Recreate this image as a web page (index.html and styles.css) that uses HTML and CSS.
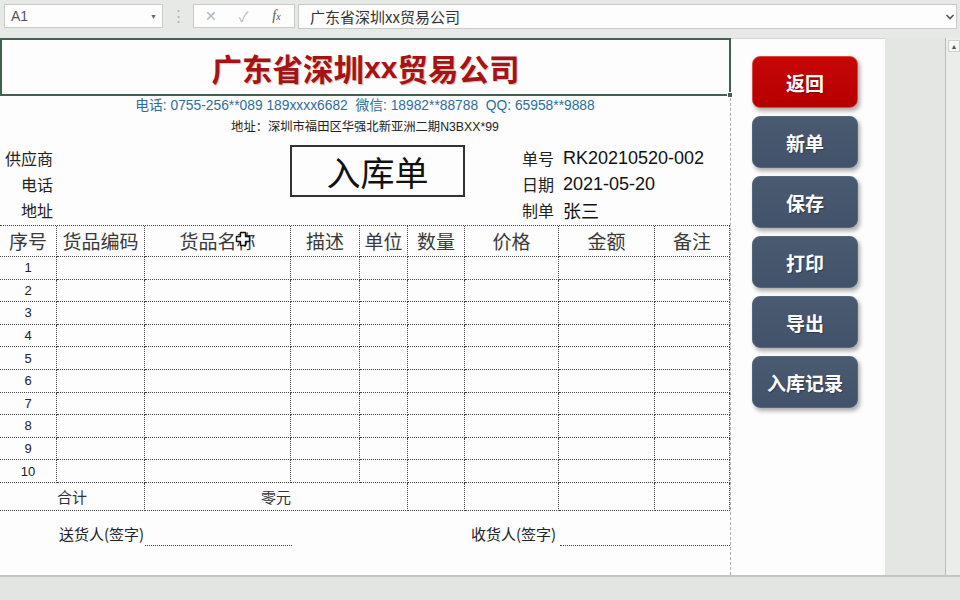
FILE: index.html
```html
<!DOCTYPE html>
<html lang="zh-CN">
<head>
<meta charset="utf-8">
<title>入库单</title>
<link rel="stylesheet" href="styles.css">
</head>
<body>
<div class="app">
  <div class="topbar">
    <div class="namebox"><span>A1</span><span class="caret">▼</span></div>
    <div class="grip">⋮</div>
    <div class="fbtns"><span class="fb x">✕</span><span class="fb ok">✓</span><span class="fb fx">f<small>x</small></span></div>
    <div class="formula"><span>广东省深圳xx贸易公司</span>
      <svg class="chev" width="10" height="8" viewBox="0 0 10 8"><path d="M1.5 2 L5 5.5 L8.5 2" fill="none" stroke="#555" stroke-width="1.6"/></svg>
    </div>
  </div>
  <div class="main">
    <div class="sheet">
      <div class="page">
        <div class="title">广东省深圳<span class="lat">xx</span>贸易公司<span class="handle"></span></div>
        <div class="contact">电话: 0755-256**089 189xxxx6682&nbsp; 微信: 18982**88788&nbsp; QQ: 65958**9888</div>
        <div class="addr">地址：深圳市福田区华强北新亚洲二期N3BXX*99</div>
        <div class="info">
          <div class="labels"><div>供应商</div><div>电话</div><div>地址</div></div>
          <div class="doctitle">入库单</div>
          <div class="meta">
            <div class="mrow"><span class="mk">单号</span><span class="mv">RK20210520-002</span></div>
            <div class="mrow"><span class="mk">日期</span><span class="mv">2021-05-20</span></div>
            <div class="mrow"><span class="mk">制单</span><span class="mv cjk">张三</span></div>
          </div>
        </div>
        <div class="grid">
          <div class="c h">序号</div><div class="c h">货品编码</div><div class="c h">货品名称</div><div class="c h">描述</div><div class="c h">单位</div><div class="c h">数量</div><div class="c h">价格</div><div class="c h">金额</div><div class="c h">备注</div>
          <div class="c n">1</div><div class="c"></div><div class="c"></div><div class="c"></div><div class="c"></div><div class="c"></div><div class="c"></div><div class="c"></div><div class="c"></div>
          <div class="c n">2</div><div class="c"></div><div class="c"></div><div class="c"></div><div class="c"></div><div class="c"></div><div class="c"></div><div class="c"></div><div class="c"></div>
          <div class="c n">3</div><div class="c"></div><div class="c"></div><div class="c"></div><div class="c"></div><div class="c"></div><div class="c"></div><div class="c"></div><div class="c"></div>
          <div class="c n">4</div><div class="c"></div><div class="c"></div><div class="c"></div><div class="c"></div><div class="c"></div><div class="c"></div><div class="c"></div><div class="c"></div>
          <div class="c n">5</div><div class="c"></div><div class="c"></div><div class="c"></div><div class="c"></div><div class="c"></div><div class="c"></div><div class="c"></div><div class="c"></div>
          <div class="c n">6</div><div class="c"></div><div class="c"></div><div class="c"></div><div class="c"></div><div class="c"></div><div class="c"></div><div class="c"></div><div class="c"></div>
          <div class="c n">7</div><div class="c"></div><div class="c"></div><div class="c"></div><div class="c"></div><div class="c"></div><div class="c"></div><div class="c"></div><div class="c"></div>
          <div class="c n">8</div><div class="c"></div><div class="c"></div><div class="c"></div><div class="c"></div><div class="c"></div><div class="c"></div><div class="c"></div><div class="c"></div>
          <div class="c n">9</div><div class="c"></div><div class="c"></div><div class="c"></div><div class="c"></div><div class="c"></div><div class="c"></div><div class="c"></div><div class="c"></div>
          <div class="c n">10</div><div class="c"></div><div class="c"></div><div class="c"></div><div class="c"></div><div class="c"></div><div class="c"></div><div class="c"></div><div class="c"></div>
          <div class="c t span2">合计</div><div class="c t span3">零元</div><div class="c"></div><div class="c"></div><div class="c"></div><div class="c"></div>
          <svg class="cursor" width="16" height="16" viewBox="0 0 16 16"><path d="M5.5 1.5h5v4h4v5h-4v4h-5v-4h-4v-5h4z" fill="#fff" stroke="#111" stroke-width="1.4" stroke-linejoin="round"/></svg>
        </div>
        <div class="sign">
          <span class="slabel">送货人(签字)</span><span class="sline short"></span>
          <span class="slabel second">收货人(签字)</span><span class="sline long"></span>
        </div>
      </div>
      <div class="side">
        <div class="btn red">返回</div>
        <div class="btn">新单</div>
        <div class="btn">保存</div>
        <div class="btn">打印</div>
        <div class="btn">导出</div>
        <div class="btn">入库记录</div>
      </div>
    </div>
    <div class="gutter"></div>
    <div class="vscroll"><div class="up">▲</div></div>
  </div>
  <div class="bottom"></div>
</div>
</body>
</html>
```

FILE: styles.css
```css
* { box-sizing: border-box; margin: 0; padding: 0; }
body {
  width: 960px; height: 600px; overflow: hidden;
  font-family: "Liberation Sans", "Noto Sans CJK SC", sans-serif;
  background: #fcfdfc; color: #222;
}
.app { display: flex; flex-direction: column; height: 600px; }

/* formula bar */
.topbar { height: 38px; background: #e7e9e6; display: flex; align-items: flex-start; padding: 4px 3px 0 4px; }
.namebox {
  width: 159px; height: 24px; background: #fcfdfc; border: 1px solid #c9cbc8;
  display: flex; align-items: center; justify-content: space-between;
  padding: 0 5px 0 6px; font-size: 14px; color: #555;
}
.caret { font-size: 7px; color: #666; }
.grip { width: 30px; height: 24px; text-align: center; color: #b0b2af; font-size: 15px; line-height: 24px; }
.fbtns {
  width: 102px; height: 24px; background: #fcfdfc; border: 1px solid #c9cbc8;
  display: flex; align-items: center;
}
.fb { width: 33px; text-align: center; color: #b4b6b3; font-size: 14px; }
.fx { color: #555; font-family: "Liberation Serif", serif; font-style: italic; font-size: 14px; }
.fx small { font-size: 10px; }
.formula {
  margin-left: 3px; flex: 1; height: 25px; background: #fcfdfc; border: 1px solid #c9cbc8;
  display: flex; align-items: center; justify-content: space-between;
  padding: 0 1px 0 11px; font-size: 15px; color: #333;
  font-family: "Noto Sans CJK SC", sans-serif;
}

/* main area */
.main { height: 537px; display: flex; }
.sheet { width: 885px; display: flex; background: #fcfdfc; }
.page { width: 731px; border-right: 1px dashed #a9aba8; display: flex; flex-direction: column; }
.title {
  position: relative; z-index: 1;
  width: 731px; height: 58px; border: 2px solid #3f6350;
  display: flex; align-items: center; justify-content: center;
  font-family: "Noto Sans CJK SC", sans-serif; font-weight: 700; font-size: 30.5px;
  color: #a51414; text-shadow: 1px 1px 1px rgba(90,0,0,.25); padding-top: 1px;
}
.title .lat { font-family: "Liberation Sans", sans-serif; font-weight: 700; font-size: 30px; }
.handle { position: absolute; right: -4px; bottom: -4px; width: 6px; height: 6px; background: #3f6350; border: 1px solid #fff; }
.contact { height: 20px; line-height: 20px; text-align: center; font-size: 13.8px; color: #2f6d9b; }
.addr { height: 22px; line-height: 22px; text-align: center; font-size: 12.3px; color: #222; }
.info { height: 87px; padding-top: 7px; display: flex; align-items: flex-start; font-family: "Noto Sans CJK SC", sans-serif; }
.labels { width: 53px; text-align: right; font-size: 16px; line-height: 26px; color: #222; }
.doctitle {
  margin-left: 237px; width: 175px; height: 52px; border: 2px solid #333;
  display: flex; align-items: center; justify-content: center;
  font-size: 34px; color: #111;
}
.meta { margin-left: 57px; }
.mrow { height: 26px; display: flex; align-items: center; }
.mk { font-size: 16px; color: #222; width: 41px; }
.mv { font-family: "Liberation Sans", sans-serif; font-size: 18px; color: #111; }
.mv.cjk { font-family: "Noto Sans CJK SC", sans-serif; }

/* table */
.grid {
  position: relative;
  display: grid;
  grid-template-columns: 57px 88px 146px 69px 48px 57px 94px 96px 75px;
  grid-template-rows: 31px repeat(10, 22.6px) 28px;
  border-top: 1px dotted #444;
}
.c { border-right: 1px dotted #444; border-bottom: 1px dotted #444; display: flex; align-items: center; justify-content: center; }
.h { font-family: "Noto Sans CJK SC", sans-serif; font-size: 19px; color: #3a3a3a; padding-bottom: 1px; }
.n { font-size: 13px; color: #222; }
.t { font-family: "Noto Sans CJK SC", sans-serif; font-size: 15px; color: #333; }
.span2 { grid-column: span 2; }
.span3 { grid-column: span 3; }
.cursor { position: absolute; left: 235px; top: 5px; }

/* signatures */
.sign { padding: 10px 0 0 59px; display: flex; align-items: flex-start; font-family: "Noto Sans CJK SC", sans-serif; }
.slabel { font-size: 15px; line-height: 26px; color: #222; width: 86px; white-space: nowrap; }
.sline { height: 25px; border-bottom: 1px dotted #444; }
.sline.short { width: 147px; }
.slabel.second { margin-left: 179px; width: 89px; }
.sline.long { flex: 1; }

/* buttons */
.side { flex: 1; padding: 17px 0 0 21px; border-top: 1px solid #d4d6d3; }
.btn {
  width: 106px; height: 52px; margin-bottom: 8px; border-radius: 8px;
  background: linear-gradient(#4a5a71, #42526a);
  border: 1px solid #56667d;
  box-shadow: 2px 3px 4px rgba(0,0,0,.32);
  display: flex; align-items: center; justify-content: center;
  color: #fff; font-family: "Noto Sans CJK SC", sans-serif; font-weight: 700; font-size: 19px;
  text-shadow: 1px 1px 1px rgba(0,0,0,.3);
}
.btn.red { background: linear-gradient(#c80606, #b50000); border-color: #d44a4a; }

.gutter { width: 60px; background: #e3e6e2; }
.vscroll { width: 15px; background: #ebedea; border-left: 1px solid #b9bbb8; display: flex; flex-direction: column; padding-left: 2px; }
.up { height: 12px; margin-top: 2px; font-size: 7px; line-height: 12px; text-align: center; color: #555; background: #f7f8f7; border: 1px solid #cfd1ce; }
.bottom { height: 25px; background: #e3e5e2; border-top: 2px solid #c3c5c2; }
```
